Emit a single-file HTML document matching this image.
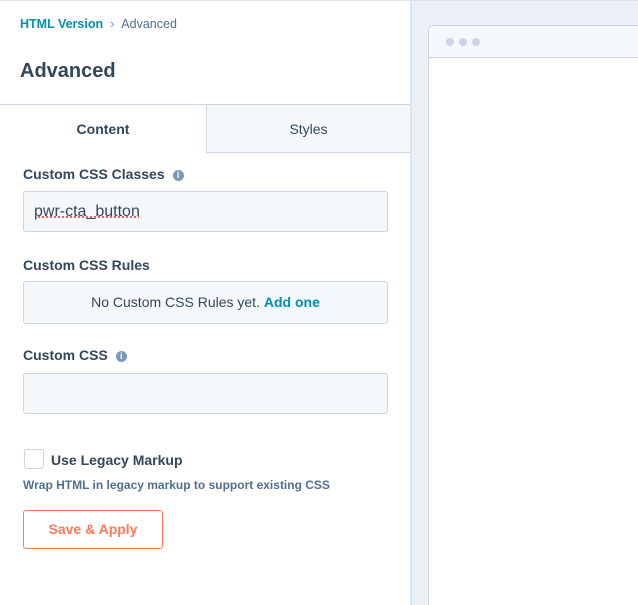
<!DOCTYPE html>
<html style="overflow:hidden;height:605px"><head><style>
*{box-sizing:border-box;margin:0;padding:0}
body{width:638px;height:605px;overflow:hidden;font-family:"Liberation Sans",sans-serif;background:#eaf0f6;position:relative;color:#33475b}
.left{position:absolute;left:0;top:0;width:412px;height:605px;background:#fff;border-right:2px solid #dfe3eb}
.a{position:absolute}
.lbl{font-size:14px;font-weight:bold;color:#33475b}
.inp{position:absolute;left:23px;width:365px;background:#f5f8fa;border:1px solid #cbd6e2;border-radius:3px}
.info{display:inline-block;width:11px;height:11px;border-radius:50%;background:#7c98b6;color:#fff;font-size:9px;text-align:center;line-height:11px;font-weight:bold;vertical-align:1px;margin-left:8px}
.dot{width:8px;height:8px;border-radius:50%;background:#cbd6e2;margin-right:5px}
</style></head><body>
<div class="left">
<div class="a" style="left:0;top:0;width:410px;height:1px;background:#dfe3eb"></div>
<div class="a" style="left:20px;top:17px;font-size:12.5px"><span style="color:#0091ae;font-weight:bold">HTML Version</span><span style="color:#7c98b6;margin:0 7px">›</span><span style="color:#516f90">Advanced</span></div>
<div class="a" style="left:20px;top:60px;font-size:20px;font-weight:bold">Advanced</div>
<div class="a" style="left:0;top:104px;width:410px;height:49px;border-top:1px solid #cbd6e2"></div>
<div class="a" style="left:206px;top:104px;width:204px;height:49px;background:#f5f8fa;border-left:1px solid #cbd6e2;border-bottom:1px solid #cbd6e2;border-top:1px solid #cbd6e2;text-align:center;line-height:48px;font-size:14px">Styles</div>
<div class="a" style="left:0;top:105px;width:206px;height:48px;text-align:center;line-height:48px;font-size:14px;font-weight:bold">Content</div>
<div class="a lbl" style="left:23px;top:166px">Custom CSS Classes<span class="info">i</span></div>
<div class="inp" style="top:191px;height:41px;padding:11px 10px;font-size:16px;color:#33475b"><span style="text-decoration:underline dotted #e33;">pwr-cta_button</span></div>
<div class="a lbl" style="left:23px;top:257px">Custom CSS Rules</div>
<div class="inp" style="top:281px;height:43px;text-align:center;line-height:41px;font-size:14px">No Custom CSS Rules yet. <b style="color:#0091ae">Add one</b></div>
<div class="a lbl" style="left:23px;top:347px">Custom CSS<span class="info">i</span></div>
<div class="inp" style="top:373px;height:41px"></div>
<div class="a" style="left:24px;top:449px;width:20px;height:20px;border:1px solid #cbd6e2;border-radius:3px;background:#fff"></div>
<div class="a" style="left:51px;top:452px;font-size:14px;font-weight:bold">Use Legacy Markup</div>
<div class="a" style="left:23px;top:478px;font-size:12px;font-weight:bold;color:#516f90">Wrap HTML in legacy markup to support existing CSS</div>
<div class="a" style="left:23px;top:510px;width:140px;height:39px;border:1px solid #ff7a59;border-radius:3px;color:#ff7a59;font-size:14px;font-weight:bold;text-align:center;line-height:37px">Save &amp; Apply</div>
</div>
<div class="a" style="left:412px;top:0;width:226px;height:1px;background:#dfe3eb"></div>
<div class="a" style="left:428px;top:25px;width:210px;height:580px;background:#fff;border:1px solid #cbd6e2;border-right:none;border-bottom:none;border-radius:5px 0 0 0">
<div style="height:32px;background:#f5f8fa;border-bottom:1px solid #cbd6e2;border-radius:5px 0 0 0;display:flex;align-items:center;padding-left:17px">
<div class="dot"></div><div class="dot"></div><div class="dot"></div>
</div></div>
</body></html>
